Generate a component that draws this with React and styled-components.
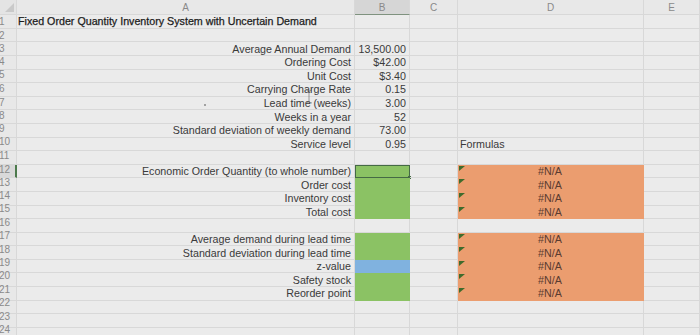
import React from 'react';
import styled, { createGlobalStyle, css } from 'styled-components';

const GlobalStyle = createGlobalStyle`
    html, body {
        margin: 0;
        padding: 0;
        background: #eaeaea;
        overflow: hidden;
    }
`;

const GREEN = '#8bc264';
const BLUE = '#80b2df';
const ORANGE = '#eb9d6f';
const LINE = '#d8d8d8';

const fills = { green: GREEN, blue: BLUE, orange: ORANGE };

const Sheet = styled.div`
    position: relative;
    display: grid;
    grid-template-columns: 17px 338px 55px 48px 186px 1fr;
    grid-template-rows: 15.2px;
    grid-auto-rows: 13.6px;
    width: 700px;
    height: 335px;
    overflow: hidden;
    background: #ebebeb;
    font-family: "Liberation Sans", Arial, sans-serif;
    font-size: 10.7px;
    color: #3a3a3a;
`;

const Corner = styled.div`
    position: relative;
    background: #e4e4e4;
    border-right: 1px solid ${LINE};
    border-bottom: 1px solid ${LINE};
    box-sizing: border-box;
    &::after {
        content: '';
        position: absolute;
        right: 2px;
        bottom: 2px;
        border-left: 9px solid transparent;
        border-bottom: 9px solid #c9c9c9;
    }
`;

const ColHead = styled.div`
    display: flex;
    align-items: center;
    justify-content: center;
    box-sizing: border-box;
    font-size: 10px;
    color: #8a8a8a;
    background: ${p => (p.$active ? '#d6d6d6' : '#e8e8e8')};
    border-right: 1px solid ${LINE};
    border-bottom: 1px solid ${p => (p.$active ? '#7f927f' : LINE)};
`;

// the photo is taken at a slight angle, so the row numbers drift up against the cells
const RowHead = styled.div`
    display: flex;
    align-items: center;
    box-sizing: border-box;
    margin-left: -1px;
    font-size: 10px;
    color: #8a8a8a;
    background: ${p => (p.$active ? '#d9d9d9' : '#e8e8e8')};
    border-right: ${p => (p.$active ? '2px solid #4c7a4c' : `1px solid ${LINE}`)};
    border-bottom: 1px solid ${LINE};

    & > span {
        transform: translateY(${p => -p.$lift}px);
    }
`;

const Cell = styled.div`
    position: relative;
    display: flex;
    align-items: center;
    justify-content: ${p => p.$align || 'flex-start'};
    box-sizing: border-box;
    padding: 0 3px 0 2px;
    white-space: nowrap;
    background: ${p => (p.$fill ? fills[p.$fill] : 'transparent')};
    border-right: 1px solid ${p => (p.$fill ? fills[p.$fill] : LINE)};
    border-bottom: 1px solid ${p => (p.$fill ? fills[p.$fill] : LINE)};
    ${p => p.$fill === 'orange' && css`
        color: #5a3b30;
    `}
    ${p => p.$title && css`
        color: #1c1c1c;
        -webkit-text-stroke: 0.25px #1c1c1c;
        padding-left: 1px;
    `}
    ${p => p.$flag && css`
        &::before {
            content: '';
            position: absolute;
            left: 1px;
            top: 1px;
            border-top: 5px solid #3f6b2c;
            border-right: 6px solid transparent;
        }
    `}
    ${p => p.$selected && css`
        outline: 1.5px solid #456a45;
        outline-offset: -1px;
        &::after {
            content: '';
            position: absolute;
            right: -2px;
            bottom: -2px;
            width: 3px;
            height: 3px;
            background: #456a45;
        }
    `}
`;

const Cursor = styled.svg`
    position: absolute;
    left: 305px;
    top: 89px;
    opacity: 0.55;
`;

const Speck = styled.span`
    position: absolute;
    left: 204px;
    top: 104px;
    width: 2px;
    height: 2px;
    border-radius: 50%;
    background: #888;
`;

const columns = ['A', 'B', 'C', 'D', 'E'];

const rows = [
    { a: 'Fixed Order Quantity Inventory System with Uncertain Demand', title: true },
    {},
    { a: 'Average Annual Demand', b: '13,500.00' },
    { a: 'Ordering Cost', b: '$42.00' },
    { a: 'Unit Cost', b: '$3.40' },
    { a: 'Carrying Charge Rate', b: '0.15' },
    { a: 'Lead time (weeks)', b: '3.00' },
    { a: 'Weeks in a year', b: '52' },
    { a: 'Standard deviation of weekly demand', b: '73.00' },
    { a: 'Service level', b: '0.95', d: 'Formulas' },
    {},
    { a: 'Economic Order Quantity (to whole number)', fill: 'green', na: true, selected: true },
    { a: 'Order cost', fill: 'green', na: true },
    { a: 'Inventory cost', fill: 'green', na: true },
    { a: 'Total cost', fill: 'green', na: true },
    {},
    { a: 'Average demand during lead time', fill: 'green', na: true },
    { a: 'Standard deviation during lead time', fill: 'green', na: true },
    { a: 'z-value', fill: 'blue', na: true },
    { a: 'Safety stock', fill: 'green', na: true },
    { a: 'Reorder point', fill: 'green', na: true },
    {},
    {},
    {},
];

export default function App() {
    return (
        <>
            <GlobalStyle />
            <Sheet>
                <Corner />
                {columns.map(c => (
                    <ColHead key={c} $active={c === 'B'}>{c}</ColHead>
                ))}

                {rows.map((row, i) => (
                    <React.Fragment key={i}>
                        <RowHead $active={i === 11} $lift={(i * 0.2).toFixed(1)}>
                            <span>{i + 1}</span>
                        </RowHead>
                        <Cell $align={row.title ? 'flex-start' : 'flex-end'} $title={row.title}>
                            {row.a}
                        </Cell>
                        <Cell $align='flex-end' $fill={row.fill} $selected={row.selected}>
                            {row.b}
                        </Cell>
                        <Cell />
                        <Cell
                            $align={row.na ? 'center' : 'flex-start'}
                            $fill={row.na ? 'orange' : undefined}
                            $flag={row.na}
                        >
                            {row.na ? '#N/A' : row.d}
                        </Cell>
                        <Cell />
                    </React.Fragment>
                ))}

                <Cursor width='8' height='15' viewBox='0 0 8 15'>
                    <path d='M1 1 Q4 1 4 3 Q4 1 7 1 M4 3 V12 M1 14 Q4 14 4 12 Q4 14 7 14' fill='none' stroke='#555' strokeWidth='1' />
                </Cursor>
                <Speck />
            </Sheet>
        </>
    );
}
